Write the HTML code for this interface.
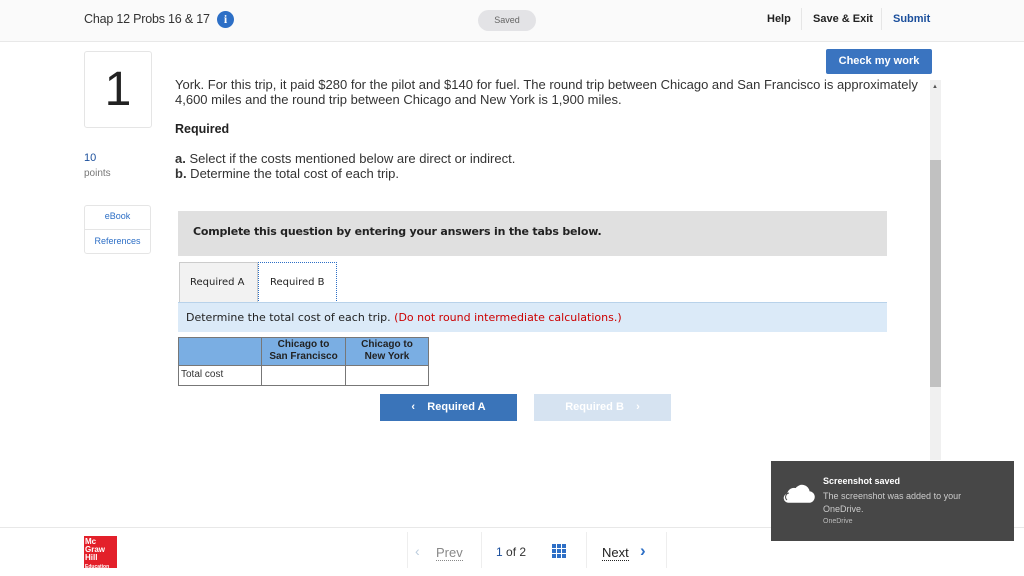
<!DOCTYPE html>
<html><head><meta charset="utf-8"><style>
*{margin:0;padding:0;box-sizing:border-box}
body{width:1024px;height:576px;position:relative;overflow:hidden;background:#fff;font-family:"Liberation Sans",sans-serif;color:#333}
.a{position:absolute}
</style></head><body>
<div class="a" style="left:0;top:0;width:1024px;height:42px;background:#fafafa;border-bottom:1px solid #e8e8e8"></div>
<div class="a" style="left:84px;top:12px;font-size:12.5px;color:#333;letter-spacing:-0.2px">Chap 12 Probs 16 &amp; 17</div>
<div class="a" style="left:217px;top:11px;width:17px;height:17px;border-radius:50%;background:#2d6fc6;color:#fff;font:bold 12px 'Liberation Serif',serif;text-align:center;line-height:17px">i</div>
<div class="a" style="left:478px;top:10px;width:58px;height:21px;border-radius:11px;background:#e3e3e6;font-size:9px;color:#666;text-align:center;line-height:21px">Saved</div>
<div class="a" style="left:767px;top:13px;font-size:11px;font-weight:bold;color:#222">Help</div>
<div class="a" style="left:801px;top:8px;width:1px;height:22px;background:#e6e6e6"></div>
<div class="a" style="left:813px;top:13px;font-size:11px;font-weight:bold;color:#222">Save &amp; Exit</div>
<div class="a" style="left:881px;top:8px;width:1px;height:22px;background:#e6e6e6"></div>
<div class="a" style="left:893px;top:13px;font-size:11px;font-weight:bold;color:#1b4f9c">Submit</div>

<div class="a" style="left:84px;top:51px;width:68px;height:77px;border:1px solid #e5e5e5;border-radius:3px;font-size:48px;text-align:center;line-height:75px;color:#222">1</div>
<div class="a" style="left:84px;top:152px;font-size:11px;color:#1b4f9c">10</div>
<div class="a" style="left:84px;top:168px;font-size:10px;color:#777">points</div>
<div class="a" style="left:84px;top:205px;width:67px;height:49px;border:1px solid #e5e5e5;border-radius:3px"></div>
<div class="a" style="left:84px;top:229px;width:67px;height:1px;background:#e5e5e5"></div>
<div class="a" style="left:84px;top:211px;width:67px;text-align:center;font-size:9px;color:#2d6fc6">eBook</div>
<div class="a" style="left:84px;top:236px;width:67px;text-align:center;font-size:9px;color:#2d6fc6">References</div>

<div class="a" style="left:826px;top:49px;width:106px;height:25px;background:#3a74c0;border-radius:2px;color:#fff;font-size:11px;font-weight:bold;text-align:center;line-height:25px">Check my work</div>
<div class="a" style="left:930px;top:80px;width:11px;height:380px;background:#f0f0f0"></div>
<div class="a" style="left:930px;top:160px;width:11px;height:227px;background:#c1c1c1"></div>
<div class="a" style="left:932px;top:84px;font-size:6px;color:#555">▲</div>

<div class="a" style="left:175px;top:77px;font-size:13px;color:#333;line-height:15px;width:760px;white-space:nowrap">York. For this trip, it paid $280 for the pilot and $140 for fuel. The round trip between Chicago and San Francisco is approximately<br>4,600 miles and the round trip between Chicago and New York is 1,900 miles.</div>
<div class="a" style="left:175px;top:122px;font-size:12.5px;font-weight:bold;color:#222">Required</div>
<div class="a" style="left:175px;top:151px;font-size:13px;line-height:15px"><b>a.</b> Select if the costs mentioned below are direct or indirect.<br><b>b.</b> Determine the total cost of each trip.</div>

<div class="a" style="left:178px;top:211px;width:709px;height:45px;background:#e0e0e0"></div>
<div class="a" style="left:193px;top:225px;font-size:11px;font-weight:bold;color:#222;font-family:'DejaVu Sans',sans-serif;letter-spacing:-0.2px">Complete this question by entering your answers in the tabs below.</div>

<div class="a" style="left:179px;top:262px;width:79px;height:40px;background:#f2f2f2;border:1px solid #ccc;border-bottom:none"></div>
<div class="a" style="left:190px;top:277px;font-size:10px;font-family:'DejaVu Sans',sans-serif;color:#222">Required A</div>
<div class="a" style="left:258px;top:262px;width:79px;height:41px;background:#fff;border:1px dotted #2d6fc6"></div>
<div class="a" style="left:270px;top:277px;font-size:10px;font-family:'DejaVu Sans',sans-serif;color:#222">Required B</div>
<div class="a" style="left:178px;top:302px;width:709px;height:30px;background:#dbeaf8;border-top:1px solid #b8d2ea"></div>
<div class="a" style="left:186px;top:311px;font-size:11px;font-family:'DejaVu Sans',sans-serif;color:#222">Determine the total cost of each trip. <span style="color:#c00">(Do not round intermediate calculations.)</span></div>

<div class="a" style="left:178px;top:337px;width:251px;height:49px;border:1px solid #777;background:#fff"></div>
<div class="a" style="left:179px;top:338px;width:249px;height:27px;background:#7aaee3"></div>
<div class="a" style="left:261px;top:338px;width:1px;height:47px;background:#777"></div>
<div class="a" style="left:345px;top:338px;width:1px;height:47px;background:#777"></div>
<div class="a" style="left:179px;top:365px;width:249px;height:1px;background:#777"></div>
<div class="a" style="left:262px;top:339px;width:83px;text-align:center;font-size:10px;font-weight:bold;line-height:12px;color:#222">Chicago to<br>San Francisco</div>
<div class="a" style="left:346px;top:339px;width:82px;text-align:center;font-size:10px;font-weight:bold;line-height:12px;color:#222">Chicago to<br>New York</div>
<div class="a" style="left:181px;top:369px;font-size:10px;color:#333">Total cost</div>

<div class="a" style="left:380px;top:394px;width:137px;height:27px;background:#3a74b9;color:#fff;font-size:11px;font-weight:bold;text-align:center;line-height:27px">‹&nbsp;&nbsp;&nbsp; Required A</div>
<div class="a" style="left:534px;top:394px;width:137px;height:27px;background:#d6e3f1;color:#fff;font-size:11px;font-weight:bold;text-align:center;line-height:27px">Required B&nbsp;&nbsp;&nbsp; ›</div>

<div class="a" style="left:0;top:527px;width:1024px;height:1px;background:#e8e8e8"></div>
<div class="a" style="left:84px;top:536px;width:33px;height:32px;background:#e3202a;color:#fff;font-size:8px;font-weight:bold;line-height:8px;padding:2px 1px">Mc<br>Graw<br>Hill<br><span style="font-size:5px">Education</span></div>
<div class="a" style="left:407px;top:532px;width:1px;height:36px;background:#eee"></div>
<div class="a" style="left:481px;top:532px;width:1px;height:36px;background:#eee"></div>
<div class="a" style="left:586px;top:532px;width:1px;height:36px;background:#eee"></div>
<div class="a" style="left:666px;top:532px;width:1px;height:36px;background:#eee"></div>
<div class="a" style="left:415px;top:543px;font-size:14px;color:#bcd">‹</div>
<div class="a" style="left:436px;top:545px;font-size:13px;color:#888;border-bottom:1px dotted #888">Prev</div>
<div class="a" style="left:496px;top:545px;font-size:12px;color:#333"><span style="color:#1b4f9c">1</span> of 2</div>
<svg class="a" style="left:552px;top:544px" width="15" height="15"><g fill="#2d6fc6"><rect x="0" y="0" width="4" height="4"/><rect x="5" y="0" width="4" height="4"/><rect x="10" y="0" width="4" height="4"/><rect x="0" y="5" width="4" height="4"/><rect x="5" y="5" width="4" height="4"/><rect x="10" y="5" width="4" height="4"/><rect x="0" y="10" width="4" height="4"/><rect x="5" y="10" width="4" height="4"/><rect x="10" y="10" width="4" height="4"/></g></svg>
<div class="a" style="left:602px;top:545px;font-size:13px;color:#222;border-bottom:1px dotted #222">Next</div>
<div class="a" style="left:640px;top:541px;font-size:17px;font-weight:bold;color:#2d6fc6">›</div>

<div class="a" style="left:771px;top:461px;width:243px;height:80px;background:#474747"></div>
<svg class="a" style="left:783px;top:482px" width="32" height="22"><path d="M6 20 H26 A5 5 0 0 0 26 10 A7 7 0 0 0 13 7 A6 6 0 0 0 5 12 A4 4 0 0 0 6 20Z" fill="#fff" stroke="#fff" stroke-width="1.5"/><path d="M4 18 A4 4 0 0 1 6 11" fill="none" stroke="#474747" stroke-width="1"/></svg>
<div class="a" style="left:823px;top:476px;font-size:9px;font-weight:bold;color:#fff">Screenshot saved</div>
<div class="a" style="left:823px;top:490px;font-size:9px;color:#ccc;line-height:13px">The screenshot was added to your<br>OneDrive.</div>
<div class="a" style="left:823px;top:518px;font-size:7px;color:#bbb">OneDrive</div>
</body></html>
